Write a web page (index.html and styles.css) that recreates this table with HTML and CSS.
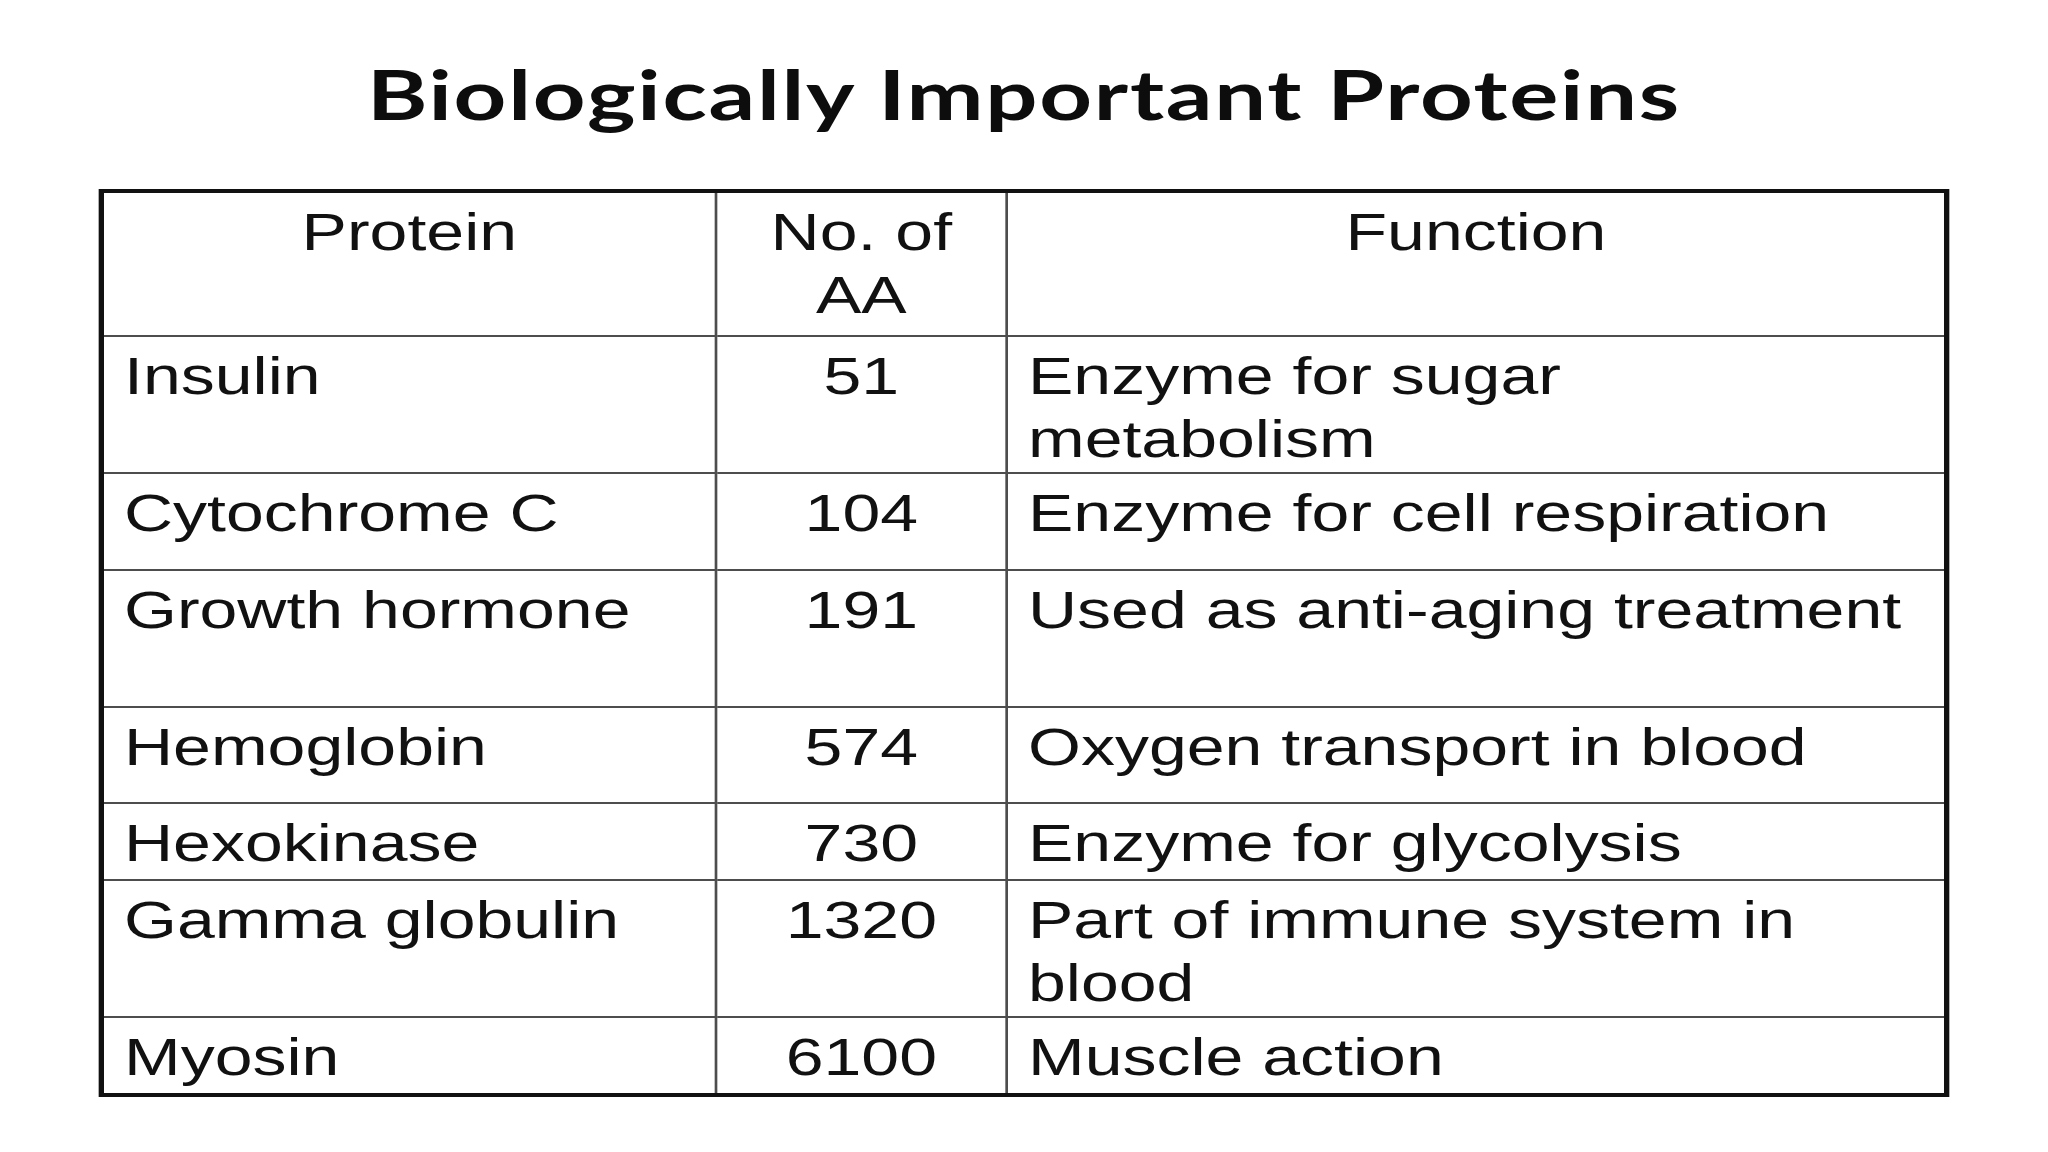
FILE: index.html
```html
<!DOCTYPE html>
<html lang="en">
<head>
<meta charset="utf-8">
<title>Biologically Important Proteins</title>
<link rel="stylesheet" href="styles.css">
</head>
<body>
<div class="slide">
  <h1 class="title">Biologically Important Proteins</h1>
  <div class="ptable">
    <div class="cell c1 head">Protein</div>
    <div class="cell c2 head">No. of<br>AA</div>
    <div class="cell c3 head">Function</div>

    <div class="cell c1">Insulin</div>
    <div class="cell c2">51</div>
    <div class="cell c3">Enzyme for sugar<br>metabolism</div>

    <div class="cell c1">Cytochrome C</div>
    <div class="cell c2">104</div>
    <div class="cell c3">Enzyme for cell respiration</div>

    <div class="cell c1">Growth hormone</div>
    <div class="cell c2">191</div>
    <div class="cell c3">Used as anti-aging treatment</div>

    <div class="cell c1">Hemoglobin</div>
    <div class="cell c2">574</div>
    <div class="cell c3">Oxygen transport in blood</div>

    <div class="cell c1">Hexokinase</div>
    <div class="cell c2">730</div>
    <div class="cell c3">Enzyme for glycolysis</div>

    <div class="cell c1">Gamma globulin</div>
    <div class="cell c2">1320</div>
    <div class="cell c3">Part of immune system in<br>blood</div>

    <div class="cell c1 last">Myosin</div>
    <div class="cell c2 last">6100</div>
    <div class="cell c3 last">Muscle action</div>
  </div>
</div>
</body>
</html>
```
FILE: styles.css
```css
html, body {
  margin: 0;
  padding: 0;
  background: #ffffff;
  overflow: hidden;
}

.slide {
  width: 1536px;
  height: 1152px;
  background: #ffffff;
  transform: scaleX(1.33333);
  transform-origin: 0 0;
  padding-top: 54px;
  box-sizing: border-box;
}

.title {
  margin: 0;
  font-family: "Lato", "Open Sans", sans-serif;
  font-weight: 700;
  font-size: 69px;
  line-height: 80px;
  height: 80px;
  text-align: center;
  color: #0d0d0d;
  letter-spacing: 1.3px;
}

.ptable {
  margin: 55px 0 0 74px;
  width: 1388px;
  box-sizing: border-box;
  border: 4px solid #111111;
  display: grid;
  grid-template-columns: 460px 218px 1fr;
  grid-template-rows: 144px 137px 97px 137px 96px 77px 137px 75px;
  font-family: "Liberation Sans", Arial, sans-serif;
  font-size: 51px;
  line-height: 63px;
  color: #111111;
}

.cell {
  box-sizing: border-box;
  padding: 8px 13px 0 15px;
  border-bottom: 2px solid #4d4d4d;
  white-space: nowrap;
  overflow: hidden;
}

.c1, .c2 {
  border-right: 2px solid #4d4d4d;
}

.c2 {
  text-align: center;
  padding-left: 13px;
}

.head {
  text-align: center;
  padding-left: 13px;
}

.last {
  border-bottom: none;
}
```
